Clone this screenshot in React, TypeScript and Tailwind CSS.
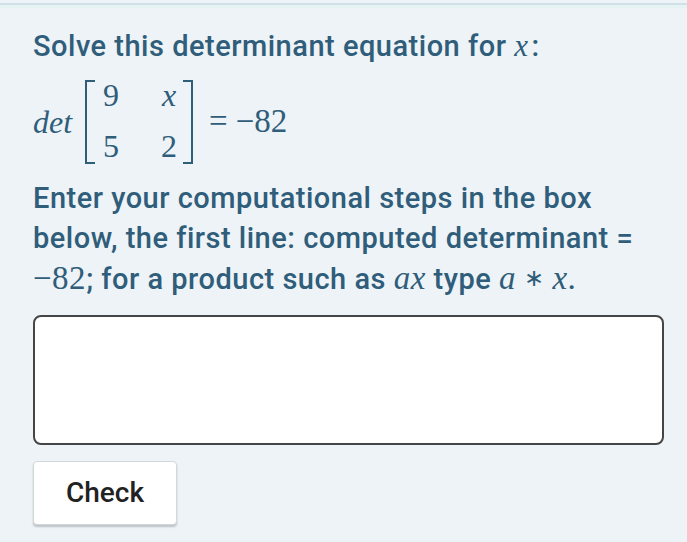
const serif = "font-['Liberation_Serif',serif] font-normal";

export default function App() {
  return (
    <div className="min-h-[542px] bg-[#edf3f7] font-['Roboto',sans-serif]">
      <div className="h-[3px] bg-[#edf3f7]" />
      <div className="h-[2px] bg-[#cfe0e6]" />
      <div className="h-[3px] bg-[#e6f3f3]" />

      <main className="pl-[33px] pr-[23px] pt-[18px] text-[#2f5d7a]">
        <h1 className="text-[29px] leading-[40px] font-medium tracking-[0.5px]">
          Solve this determinant equation for{" "}
          <span className={`${serif} italic text-[31px]`}>x</span>
          <span className="ml-[3px]">:</span>
        </h1>

        <div className={`mt-[14px] flex items-center h-[84px] ${serif} text-[32px]`}>
          <span className="italic w-[52px]">det</span>
          <div className="flex h-[84px]">
            <span className="w-[10px] border-l-2 border-t-2 border-b-2 border-[#2f5d7a]" />
            <div className="grid grid-cols-2 grid-rows-[30px_30px] gap-x-[42px] gap-y-[21px] pl-[8px] pr-[6px] leading-[30px]">
              <span className="text-center">9</span>
              <span className="text-center italic">x</span>
              <span className="text-center">5</span>
              <span className="text-center">2</span>
            </div>
            <span className="w-[10px] border-r-2 border-t-2 border-b-2 border-[#2f5d7a]" />
          </div>
          <span className="ml-[16px] text-[33px]">=</span>
          <span className="ml-[8px] text-[33px]">−82</span>
        </div>

        <p className="mt-[14px] text-[29px] leading-[40px] font-medium tracking-[0.5px]">
          Enter your computational steps in the box
          <br />
          below, the first line: computed determinant =
          <br />
          <span className={`${serif} text-[33px]`}>−82</span>; for a product such as{" "}
          <span className={`${serif} italic text-[33px]`}>ax</span> type{" "}
          <span className={`${serif} italic text-[33px]`}>a</span>
          <span className={`${serif} text-[24px] mx-[8px] relative top-[-3px]`}>∗</span>
          <span className={`${serif} italic text-[33px]`}>x</span>.
        </p>

        <textarea className="mt-[14px] block w-full h-[130px] bg-white border-2 border-[#454545] rounded-[8px] resize-none" />

        <button className="mt-[16px] w-[144px] h-[64px] bg-white border border-[#d4d7d9] rounded-[4px] shadow-[0_2px_2px_rgba(0,0,0,0.2)] text-[28px] font-medium text-[#222]">
          Check
        </button>
      </main>
    </div>
  );
}
